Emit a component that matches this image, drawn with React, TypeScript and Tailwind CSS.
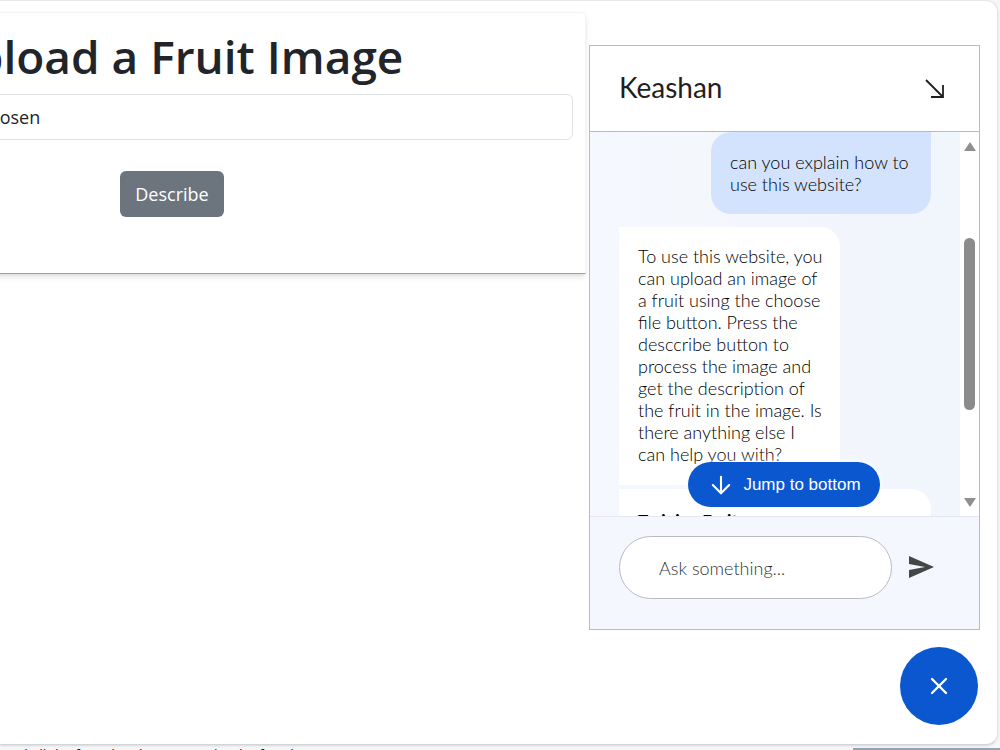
import { ArrowDown, X } from "lucide-react";

const reply = [
  "To use this website, you",
  "can upload an image of",
  "a fruit using the choose",
  "file button. Press the",
  "desccribe button to",
  "process the image and",
  "get the description of",
  "the fruit in the image. Is",
  "there anything else I",
  "can help you with?",
].join("\n");

const UploadCard = () => (
  <section className="-ml-[242px] mt-[11px] flex min-w-0 flex-1 flex-col items-center self-start border border-gray-100 border-b-gray-400 bg-white px-3 pt-[15px] pb-14 font-['Open_Sans',sans-serif] shadow-md">
    <h1 className="text-[46px] leading-[56px] font-semibold whitespace-nowrap text-[#212529]">
      Upload a Fruit Image
    </h1>
    <input
      type="file"
      aria-label="Fruit image"
      className="mt-[10px] h-[46px] w-full rounded-md border border-[#dee2e6] text-lg leading-[44px] text-[#212529] file:mr-3 file:h-[44px] file:w-[137px] file:bg-[#f8f9fa]"
    />
    <button
      type="button"
      className="mt-[31px] h-[46px] w-[104px] rounded-md bg-[#6c757d] text-lg text-white"
    >
      Describe
    </button>
  </section>
);

const Scrollbar = () => (
  <div className="flex w-[19px] shrink-0 flex-col items-center bg-white py-[9px]">
    <svg width="12" height="10" viewBox="0 0 12 10" fill="#8f8f8f">
      <path d="M6 1 12 10H0Z" />
    </svg>
    <div className="mt-[87px] h-[172px] w-[11px] rounded-full bg-[#8b8b8b]" />
    <svg className="mt-auto" width="12" height="10" viewBox="0 0 12 10" fill="#8f8f8f">
      <path d="M6 10 12 1H0Z" />
    </svg>
  </div>
);

const Messages = () => (
  <div className="relative flex h-[384px] bg-gradient-to-r from-[#f5f8fd] to-[#f1f5fc]">
    <div className="flex min-w-0 flex-1 flex-col overflow-hidden pr-[29px] pl-[29px] text-lg leading-[22px] font-light text-black">
      <p className="w-[220px] shrink-0 self-end rounded-[20px] rounded-tr-none bg-[#d3e3fd] px-[19px] py-[19px] whitespace-pre">
        {"can you explain how to\nuse this website?"}
      </p>
      <p className="mt-[13px] w-[221px] shrink-0 rounded-tr-[20px] bg-white px-[19px] pt-[18px] pb-5 whitespace-pre">
        {reply}
      </p>
      <p className="mt-1 shrink-0 rounded-tr-[20px] bg-white px-[19px] py-[21px] text-[17px] font-bold">
        Training Fruit
      </p>
    </div>
    <Scrollbar />
    <button
      type="button"
      className="absolute bottom-[9px] left-[98px] flex h-[45px] w-[192px] items-center justify-center gap-2 rounded-full bg-[#0b57d0] font-['Liberation_Sans',sans-serif] text-[17px] whitespace-nowrap text-white shadow-[0_0_4px_2px_rgba(255,255,255,0.5)]"
    >
      <ArrowDown size={28} strokeWidth={1.8} />
      Jump to bottom
    </button>
  </div>
);

const ChatWindow = () => (
  <section className="border border-[#b9bcbe] bg-white font-[Lato,sans-serif]">
    <header className="flex h-[86px] items-center justify-between border-b border-[#b9bcbe] pr-[34px] pl-[29px]">
      <h2 className="pb-1 text-[28px] leading-8 text-[#1f1f1f]">Keashan</h2>
      <button type="button" aria-label="Minimize">
        <svg width="20" height="20" viewBox="0 0 20 20" fill="none" stroke="#1f1f1f" strokeWidth="1.8">
          <path d="M1 1 17 17M18 6V18H6" />
        </svg>
      </button>
    </header>
    <Messages />
    <form className="flex items-center border-t border-[#e4e8ee] bg-[#f4f7fd] pt-[19px] pr-11 pb-[30px] pl-[29px]">
      <input
        type="text"
        aria-label="Ask something"
        placeholder="Ask something..."
        className="h-[63px] min-w-0 flex-1 rounded-full border border-[#b9bcbe] bg-white px-[39px] text-lg font-light placeholder:text-[#303336]"
      />
      <button type="button" aria-label="Send" className="ml-4">
        <svg width="27" height="24" viewBox="0 0 27 24" fill="#444746">
          <path d="M1 0 26 11 1 22V14L17 11 1 8Z" />
        </svg>
      </button>
    </form>
  </section>
);

export default function App() {
  return (
    <div className="h-screen overflow-hidden bg-[#f7f7f7]">
      <main className="mr-[2px] flex gap-[3px] rounded-r-xl border border-l-0 border-gray-200 border-b-gray-300 bg-white pr-[17px] pb-[19px] shadow-sm">
        <UploadCard />
        <div className="mt-11 flex w-[391px] shrink-0 flex-col">
          <ChatWindow />
          <button
            type="button"
            aria-label="Close chat"
            className="mt-[17px] mr-[2px] flex size-[78px] items-center justify-center self-end rounded-full bg-[#0b57d0] text-white"
          >
            <X size={28} strokeWidth={2} />
          </button>
        </div>
      </main>
      <footer className="flex h-5 gap-6 overflow-hidden font-['Open_Sans',sans-serif] text-sm leading-[19px] text-[#212529]">
        <span>Find all the fruit details</span>
        <span>Describe the fruit here</span>
        <span className="mt-[3px] ml-auto h-2 w-[147px] bg-gray-400" />
      </footer>
    </div>
  );
}
